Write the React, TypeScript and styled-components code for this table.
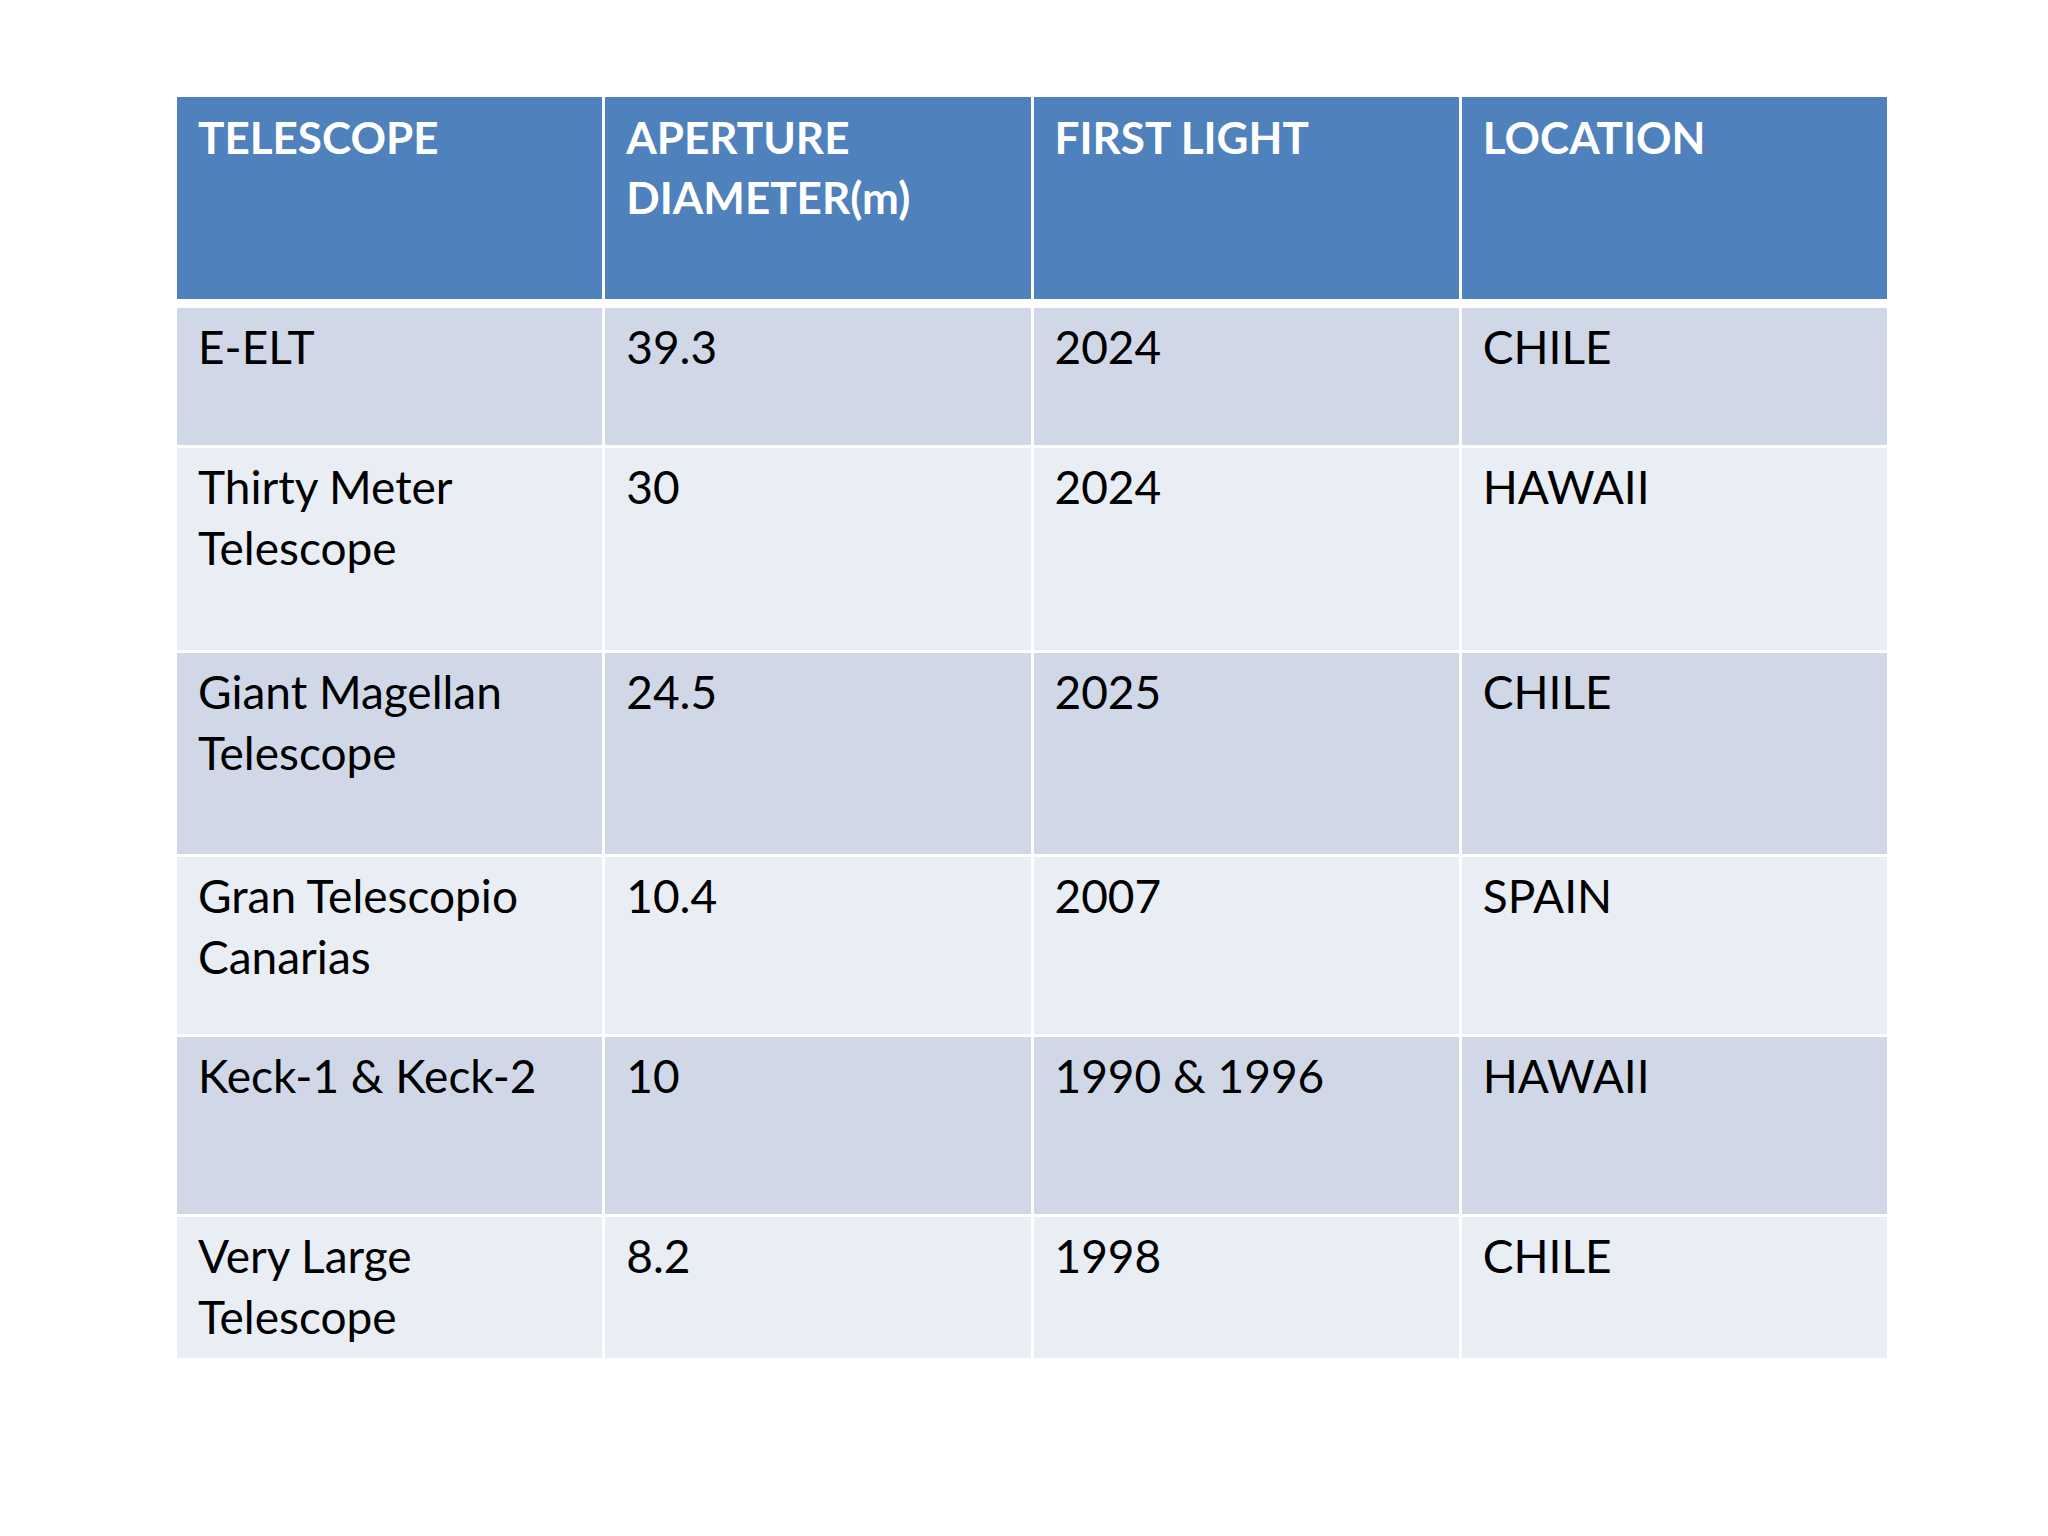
import styled, { createGlobalStyle } from 'styled-components';

const GlobalStyle = createGlobalStyle`
	html, body {
		margin: 0;
		padding: 0;
		background: #fff;
	}
	body {
		font-family: Lato, "Liberation Sans", sans-serif;
	}
`;

const Page = styled.div`
	width: 2048px;
	height: 1536px;
	padding: 97px 0 0 177px;
	box-sizing: border-box;
`;

const Table = styled.div`
	width: 1710px;
	display: flex;
	flex-direction: column;
	gap: 3px;
`;

const Row = styled.div<{ $height: number; $head?: boolean }>`
	display: grid;
	grid-template-columns: repeat(4, 1fr);
	column-gap: 3px;
	height: ${(p) => p.$height}px;
	margin-bottom: ${(p) => (p.$head ? 6 : 0)}px;
`;

const HeadCell = styled.div`
	background: #4f81bd;
	color: #fff;
	font-weight: 700;
	font-size: 44px;
	line-height: 60px;
	padding: 10px 21px 0;
`;

const Cell = styled.div<{ $dark: boolean }>`
	background: ${(p) => (p.$dark ? '#d0d8e8' : '#e9edf4')};
	color: #000;
	font-size: 46px;
	line-height: 61px;
	padding: 8px 21px 0;
`;

const headers = ['TELESCOPE', 'APERTURE DIAMETER(m)', 'FIRST LIGHT', 'LOCATION'];

const rows: { height: number; cells: string[] }[] = [
	{ height: 137, cells: ['E-ELT', '39.3', '2024', 'CHILE'] },
	{ height: 202, cells: ['Thirty Meter Telescope', '30', '2024', 'HAWAII'] },
	{ height: 201, cells: ['Giant Magellan Telescope', '24.5', '2025', 'CHILE'] },
	{ height: 177, cells: ['Gran Telescopio Canarias', '10.4', '2007', 'SPAIN'] },
	{ height: 177, cells: ['Keck-1 & Keck-2', '10', '1990 & 1996', 'HAWAII'] },
	{ height: 141, cells: ['Very Large Telescope', '8.2', '1998', 'CHILE'] },
];

const App = () => {
	return (
		<>
			<GlobalStyle />
			<Page>
				<Table>
					<Row $height={202} $head>
						{headers.map((h) => (
							<HeadCell key={h}>{h}</HeadCell>
						))}
					</Row>
					{rows.map((row, i) => (
						<Row key={row.cells[0]} $height={row.height}>
							{row.cells.map((c, j) => (
								<Cell key={j} $dark={i % 2 === 0}>
									{c}
								</Cell>
							))}
						</Row>
					))}
				</Table>
			</Page>
		</>
	);
};

export default App;
